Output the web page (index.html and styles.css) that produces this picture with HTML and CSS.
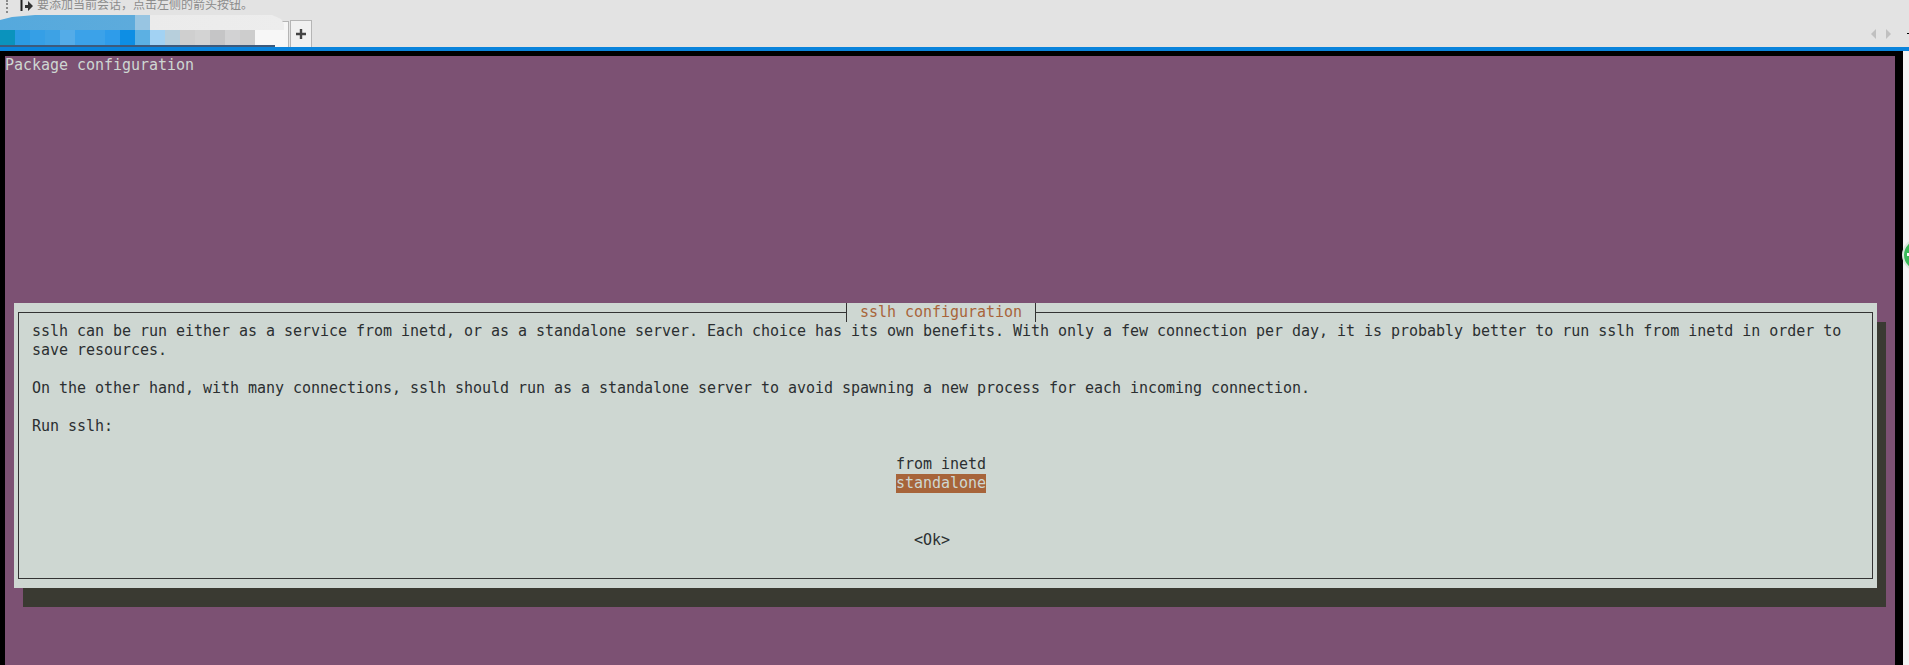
FILE: index.html
```html
<!DOCTYPE html>
<html lang="zh">
<head>
<meta charset="utf-8">
<title>sslh configuration</title>
<link rel="stylesheet" href="styles.css">
</head>
<body>
<div class="app">
  <header class="chrome">
    <div class="hint">
      <span class="grip"></span>
      <svg class="hint-icon" width="14" height="12" viewBox="0 0 14 12"><path d="M1.5 0v11" stroke="#222" stroke-width="2" fill="none"/><path d="M5 5h3V1l5 5-5 5V8H5z" fill="#333"/></svg>
      <span class="hint-text">要添加当前会话，点击左侧的箭头按钮。</span>
    </div>
    <div class="tabs">
      <div class="tab-blur">
        <div class="tab-back"></div>
        <div class="smear"></div>
        <div class="mosaic">
          <i class="c1"></i><i class="c2"></i><i class="c3"></i><i class="c4"></i><i class="c5"></i><i class="c6"></i><i class="c7"></i><i class="c8"></i><i class="c9"></i><i class="c10"></i><i class="c11"></i><i class="c12"></i><i class="c13"></i><i class="c14"></i><i class="c15"></i><i class="c16"></i><i class="c17"></i><i class="c18"></i><i class="c19"></i>
        </div>
        <div class="tab-rule"></div>
      </div>
      <div class="tab-add">
        <svg width="10" height="10" viewBox="0 0 10 10"><path d="M5 0v10M0 5h10" stroke="#444" stroke-width="2.4" fill="none"/></svg>
      </div>
      <div class="nav">
        <svg width="5" height="10" viewBox="0 0 5 10"><path d="M5 0v10L0 5z" fill="#c0c0c0"/></svg>
        <svg width="5" height="10" viewBox="0 0 5 10"><path d="M0 0v10l5-5z" fill="#c0c0c0"/></svg>
      </div>
      <span class="tick"></span>
    </div>
  </header>
  <div class="accent"></div>
  <div class="workspace">
    <main class="terminal">
      <div class="backtitle">Package configuration</div>
      <section class="dialog">
        <div class="frame">
          <div class="legend">sslh configuration</div>
          <p class="line">sslh can be run either as a service from inetd, or as a standalone server. Each choice has its own benefits. With only a few connection per day, it is probably better to run sslh from inetd in order to</p>
          <p class="line">save resources.</p>
          <p class="line">&nbsp;</p>
          <p class="line">On the other hand, with many connections, sslh should run as a standalone server to avoid spawning a new process for each incoming connection.</p>
          <p class="line">&nbsp;</p>
          <p class="line">Run sslh:</p>
          <div class="choices">
            <div class="choice">from inetd</div>
            <div class="choice selected">standalone</div>
          </div>
          <div class="ok">&lt;Ok&gt;</div>
        </div>
      </section>
    </main>
    <aside class="edge"><span class="badge"></span></aside>
  </div>
</div>
</body>
</html>
```

FILE: styles.css
```css
html, body { margin: 0; padding: 0; height: 100%; overflow: hidden; background: #000; }
.app { width: 1909px; height: 665px; display: flex; flex-direction: column; overflow: hidden; }

.chrome { height: 47px; background: #e3e3e3; flex: none; display: flex; flex-direction: column; overflow: hidden; }
.hint { height: 15px; flex: none; display: flex; align-items: flex-start; }
.grip { width: 0; height: 13px; margin-left: 6px; border-left: 2px dotted #8a8a8a; }
.hint-icon { margin-left: 12px; flex: none; }
.hint-text { margin-left: 3px; margin-top: -3px; font: 12px/14px "Noto Sans CJK SC", sans-serif; color: #8c8c8c; white-space: nowrap; }

.tabs { flex: 1; display: flex; align-items: flex-end; position: relative; }
.tab-blur { width: 290px; height: 32px; display: flex; flex-direction: column; position: relative; flex: none; }
.tab-back { position: absolute; left: 270px; top: 6px; width: 18px; height: 26px; box-sizing: content-box; background: #f6f6f6; border: 1px solid #b5b5b5; border-left: 0; border-bottom: 0; }
.smear { height: 15px; width: 285px; position: relative; background: linear-gradient(90deg, #55a9dd 0, #5dabdc 135px, #98c5e2 135px, #98c5e2 150px, #ebebeb 150px, #ededed 100%); clip-path: polygon(0 5px, 12px 2px, 35px 0, 272px 0, 281px 4px, 284px 9px, 284px 15px, 0 15px); }
.mosaic { height: 15px; width: 285px; display: flex; position: relative; }
.mosaic i { width: 15px; height: 100%; flex: none; }
.c1 { background: #0a93bd; } .c2 { background: #2b9be3; } .c3 { background: #359fe6; } .c4 { background: #3da2e5; }
.c5 { background: #54ace8; } .c6 { background: #3ba2e9; } .c7 { background: #3ba2e9; } .c8 { background: #2e9cea; }
.c9 { background: #0d8ee4; } .c10 { background: #5cb0e3; } .c11 { background: #a2d2f3; } .c12 { background: #b7cfdc; }
.c13 { background: #cfcfcf; } .c14 { background: #d3d3d3; } .c15 { background: #c5c5c6; } .c16 { background: #d2d2d3; }
.c17 { background: #cdcdcd; } .c18 { background: #f7f7f7; } .c19 { background: #f7f7f7; }
.tab-rule { height: 2px; width: 275px; background: #3d5a7c; position: relative; }

.tab-add { width: 20px; height: 26px; background: #f1f1f1; border: 1px solid #b5b5b5; border-bottom: 0; display: flex; align-items: center; justify-content: center; flex: none; }
.nav { margin-left: auto; margin-right: 18px; margin-bottom: 8px; display: flex; gap: 10px; }
.nav svg { display: block; }
.tick { position: absolute; right: 0; top: 18px; width: 2px; height: 1px; background: #000; }

.accent { height: 4px; background: #0a84dc; flex: none; }

.workspace { flex: 1; display: flex; min-height: 0; }
.terminal { width: 1890px; margin: 5px 8px 0 5px; background: #7c5173; flex: none; font: 15px/19px "DejaVu Sans Mono", monospace; letter-spacing: -0.03px; color: #2b2f31; white-space: nowrap; overflow: hidden; }
.backtitle { height: 19px; color: #ced7d2; }

.dialog { width: 1863px; height: 285px; margin: 228px 0 0 9px; background: #ced7d2; box-shadow: 9px 19px 0 #3a3a32; box-sizing: border-box; padding: 9px 4px; }
.frame { height: 100%; box-sizing: border-box; border: 1px solid #333; padding: 9px 0 0 13px; position: relative; }
.legend { position: absolute; left: 827px; top: -10px; width: 190px; height: 19px; padding-left: 13px; box-sizing: border-box; background: #ced7d2; border-left: 1px solid #333; border-right: 1px solid #333; color: #a8643a; }
.line { margin: 0; height: 19px; }

.choices { margin-top: 19px; padding-left: 864px; }
.choice { width: 90px; height: 19px; }
.selected { background: #a7643a; color: #ced7d2; }
.ok { margin-top: 38px; padding-left: 882px; }

.edge { flex: 1; background: #f4f4f4; position: relative; }
.badge { position: absolute; left: -1px; top: 187px; width: 34px; height: 34px; box-sizing: border-box; border-radius: 50%; background: #3cba5a; border: 2px solid #dbe6de; }
.badge::after { content: ""; position: absolute; left: 3px; top: 13px; width: 6px; height: 3px; background: #fff; }
```
